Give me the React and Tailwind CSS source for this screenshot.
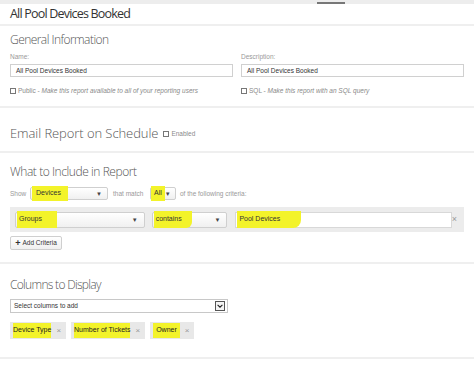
const Hl = ({ children, className = '' }) => (
  <span className={`bg-[#f3f32a] ${className}`}>{children}</span>
);

const Arrow = () => <span className="text-[6px] text-[#444] leading-none">▼</span>;

const Select = ({ className = '', children }) => (
  <div className={`flex items-center justify-between border border-[#cfcfcf] rounded-[2px] bg-gradient-to-b from-white to-[#f0f0f0] pr-[5px] ${className}`}>
    {children}
    <Arrow />
  </div>
);

const Check = ({ children }) => (
  <div className="flex items-center gap-[2px] h-[8px] text-[6.5px] text-[#8a8a8a]">
    <span className="w-[6px] h-[6px] border border-[#777] bg-white" />
    {children}
  </div>
);

const Heading = ({ children, className = '' }) => (
  <h2 className={`font-['Open_Sans',sans-serif] font-light leading-[16px] text-[#555] ${className}`}>
    {children}
  </h2>
);

const Tag = ({ children, className = '' }) => (
  <div className="flex items-center h-[17px] bg-[#e8e8e8] pl-[3px] pr-[5px] gap-[5px] text-[7px] text-[#222]">
    <Hl className={`py-[2px] ${className}`}>{children}</Hl>
    <span className="text-[#999] text-[8px]">×</span>
  </div>
);

export default function App() {
  return (
    <div className="w-[474px] h-[368px] overflow-hidden bg-white font-['Liberation_Sans',Arial,sans-serif] text-[#333]">
      <div className="h-[4px] bg-[#ededed] flex pl-[317px]">
        <div className="mt-[2px] h-[2px] w-[28px] bg-[#777]" />
      </div>
      <div className="h-[22px] flex items-center px-[10px] border-b-2 border-[#efefef]">
        <h1 className="font-['Open_Sans',sans-serif] text-[12.5px] text-[#333] tracking-[-0.8px]">All Pool Devices Booked</h1>
      </div>

      <section className="px-[10px] pt-[6px] pb-[11px] border-b-2 border-[#efefef]">
        <Heading className="text-[12px] tracking-[-0.55px]">General Information</Heading>
        <div className="mt-[5px] grid grid-cols-2 gap-x-[8px]">
          <div>
            <div className="text-[6.5px] leading-[8px] text-[#999]">Name:</div>
            <div className="mt-[3px] h-[13px] border border-[#d0d0d0] flex items-center px-[5px] text-[6.5px]">All Pool Devices Booked</div>
            <div className="mt-[10px]">
              <Check>
                <span>Public - <i>Make this report available to all of your reporting users</i></span>
              </Check>
            </div>
          </div>
          <div>
            <div className="text-[6.5px] leading-[8px] text-[#999]">Description:</div>
            <div className="mt-[3px] h-[13px] border border-[#d0d0d0] flex items-center px-[5px] text-[6.5px]">All Pool Devices Booked</div>
            <div className="mt-[10px]">
              <Check>
                <span>SQL - <i>Make this report with an SQL query</i></span>
              </Check>
            </div>
          </div>
        </div>
      </section>

      <section className="px-[10px] pt-[17px] pb-[10px] border-b-2 border-[#efefef] flex items-end gap-[5px]">
        <Heading className="text-[13px] tracking-[-0.07px]">Email Report on Schedule</Heading>
        <div className="mb-[3px]">
          <Check>Enabled</Check>
        </div>
      </section>

      <section className="px-[10px] pt-[11px] pb-[12px] border-b-2 border-[#efefef]">
        <Heading className="text-[12px] tracking-[-0.43px]">What to Include in Report</Heading>
        <div className="mt-[7px] flex items-center h-[13px] text-[6.5px] text-[#999]">
          <span className="w-[20px]">Show</span>
          <Select className="w-[78px] h-[13px] pl-[1px]">
            <Hl className="text-[7px] text-[#333] px-[4px] py-[2px] w-[36px]">Devices</Hl>
          </Select>
          <span className="ml-[5px] w-[37px]">that match</span>
          <Select className="w-[26px] h-[13px] pl-0 pr-[3px]">
            <Hl className="text-[7px] text-[#333] px-[3px] py-[2px]">All</Hl>
          </Select>
          <span className="ml-[4px]">of the following criteria:</span>
        </div>
        <div className="mt-[7px] h-[25px] bg-[#ececec] flex items-center pl-[5px] pr-[7px]">
          <Select className="w-[130px] h-[16px] pl-[1px] pr-[6px]">
            <Hl className="text-[7px] px-[2px] py-[3px] w-[40px]">Groups</Hl>
          </Select>
          <Select className="ml-[7px] w-[76px] h-[16px] pl-[1px] pr-[6px]">
            <Hl className="text-[7px] px-[2px] py-[3px] w-[38px] rounded-br-[6px]">contains</Hl>
          </Select>
          <div className="ml-[8px] w-[217px] h-[16px] bg-white border border-[#d8d8d8] flex items-center pl-[1px]">
            <Hl className="text-[7px] px-[2px] py-[3px] w-[64px] rounded-br-[8px]">Pool Devices</Hl>
          </div>
          <span className="ml-auto text-[9px] text-[#999]">×</span>
        </div>
        <div className="mt-[4px] w-[52px] h-[14px] border border-[#cfcfcf] rounded-[2px] bg-gradient-to-b from-white to-[#f0f0f0] flex items-center justify-center gap-[2px] text-[6.5px] text-[#333]">
          <span className="font-bold text-[9px] leading-none">+</span>
          Add Criteria
        </div>
      </section>

      <section className="px-[10px] pt-[13px] pb-[18px] border-b-2 border-[#efefef]">
        <Heading className="text-[12px] tracking-[-0.7px]">Columns to Display</Heading>
        <div className="mt-[6px] w-[218px] h-[14px] border border-[#c8c8c8] flex items-center justify-between pl-[3px] pr-[2px] text-[6.5px] text-[#333]">
          Select columns to add
          <svg width="10" height="10" viewBox="0 0 10 10" className="border border-[#555] bg-[#f4f4f4]">
            <path d="M2 3.5 L5 6.5 L8 3.5" fill="none" stroke="#222" strokeWidth="1.4" />
          </svg>
        </div>
        <div className="mt-[9px] flex gap-[5px]">
          <Tag>Device Type</Tag>
          <Tag>Number of Tickets</Tag>
          <Tag className="px-[3px]">Owner</Tag>
        </div>
      </section>
    </div>
  );
}
